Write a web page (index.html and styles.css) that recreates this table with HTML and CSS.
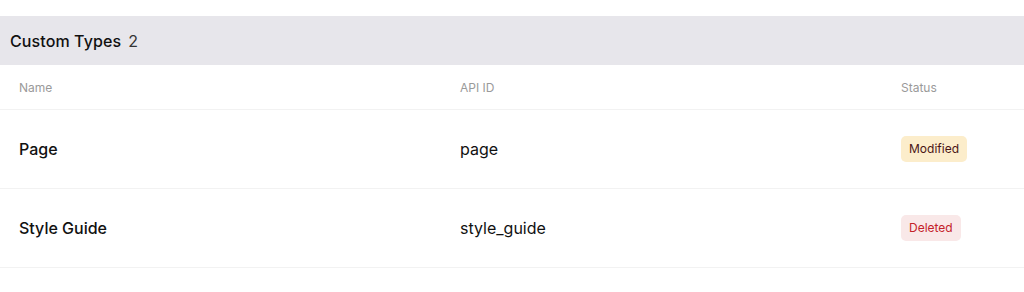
FILE: index.html
```html
<!DOCTYPE html>
<html>
<head>
<meta charset="utf-8">
<link rel="stylesheet" href="styles.css">
</head>
<body>
<section class="panel">
  <header class="panel-head">
    <h2 class="title">Custom Types</h2><span class="count">2</span>
  </header>
  <div class="table">
    <div class="row head">
      <div class="cell">Name</div>
      <div class="cell">API ID</div>
      <div class="cell">Status</div>
    </div>
    <div class="row body">
      <div class="cell name">Page</div>
      <div class="cell id">page</div>
      <div class="cell"><span class="badge modified">Modified</span></div>
    </div>
    <div class="row body">
      <div class="cell name">Style Guide</div>
      <div class="cell id">style_guide</div>
      <div class="cell"><span class="badge deleted">Deleted</span></div>
    </div>
  </div>
</section>
</body>
</html>
```

FILE: styles.css
```css
html, body {
  margin: 0;
  padding: 0;
  background: #ffffff;
}
body {
  font-family: Inter, "Noto Sans", sans-serif;
  color: #111111;
  padding-top: 16px;
}
.panel-head {
  display: flex;
  align-items: center;
  gap: 7px;
  height: 49px;
  padding-left: 10px;
  background: #e7e6eb;
}
.title {
  margin: 0;
  font-size: 16px;
  font-weight: 500;
  letter-spacing: 0.1px;
}
.count {
  font-size: 16px;
  font-weight: 400;
  color: #333;
}
.row {
  display: grid;
  grid-template-columns: 441px 441px 1fr;
  align-items: center;
  border-bottom: 1px solid #f2f2f2;
}
.row.head {
  height: 44px;
}
.row.body {
  height: 78px;
}
.cell {
  padding-left: 19px;
}
.head .cell {
  font-size: 12px;
  color: #9a9a9a;
  font-weight: 400;
}
.name {
  font-size: 16px;
  font-weight: 500;
}
.id {
  font-size: 16px;
  font-weight: 400;
}
.badge {
  display: inline-block;
  font-size: 12px;
  line-height: 16px;
  padding: 5px 8px;
  border-radius: 5px;
}
.modified {
  background: #fcedcb;
  color: #4a1515;
}
.deleted {
  background: #f9e8e8;
  color: #c4222a;
}
```
